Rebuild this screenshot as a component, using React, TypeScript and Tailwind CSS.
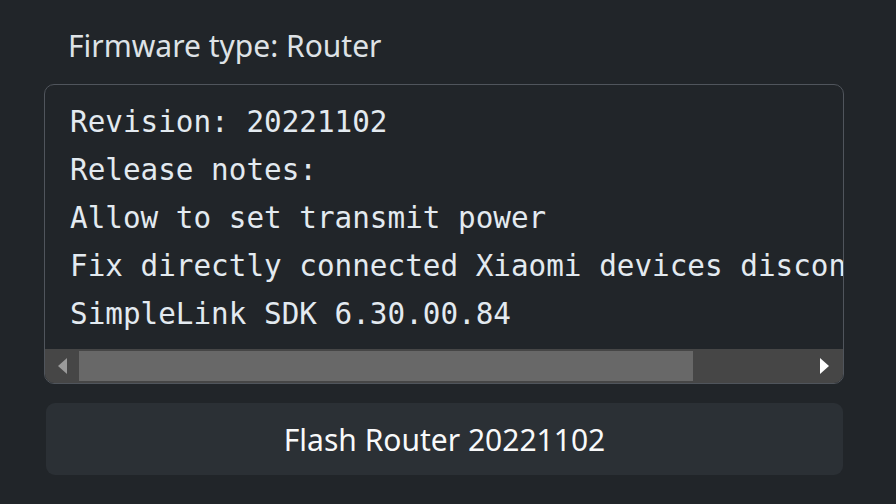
const notes = [
  'Revision: 20221102',
  'Release notes:',
  'Allow to set transmit power',
  'Fix directly connected Xiaomi devices disconnecting',
  'SimpleLink SDK 6.30.00.84',
];

function ScrollBar() {
  return (
    <div className="flex h-[34px] shrink-0 items-center bg-[#464646]">
      <div className="flex h-full w-[34px] items-center justify-center">
        <svg width="9" height="16" viewBox="0 0 9 16">
          <path d="M9 0 L0 8 L9 16 Z" fill="#9a9a9a" />
        </svg>
      </div>
      <div className="h-[30px] w-[614px] bg-[#686868]" />
      <div className="flex-1" />
      <div className="flex h-full w-[34px] items-center justify-center pr-[4px]">
        <svg width="9" height="16" viewBox="0 0 9 16">
          <path d="M0 0 L9 8 L0 16 Z" fill="#ffffff" />
        </svg>
      </div>
    </div>
  );
}

export default function App() {
  return (
    <div
      className="h-[504px] w-[896px] overflow-hidden bg-[#212529] pt-[24px]"
      style={{ fontFamily: '"Noto Sans", "Open Sans", sans-serif' }}
    >
      <div className="ml-[44px] w-[800px]">
        <p className="pl-[24px] text-[30px] leading-[44px] text-[#dee2e6]">Firmware type: Router</p>

        <div className="mt-[16px] flex h-[300px] flex-col overflow-hidden rounded-[10px] border border-[#50555c] bg-[#212529]">
          <pre
            className="flex-1 overflow-hidden pl-[25px] pt-[13px] text-[29.3px] leading-[48px] text-[#e3eaf0]"
            style={{ fontFamily: '"DejaVu Sans Mono", "Liberation Mono", monospace' }}
          >
            {notes.join('\n')}
          </pre>
          <ScrollBar />
        </div>

        <button className="mx-[2px] mt-[19px] flex h-[72px] w-[797px] items-center justify-center rounded-[9px] bg-[#2b3035] text-[30px] text-[#f8f9fa]">
          Flash Router 20221102
        </button>
      </div>
    </div>
  );
}
